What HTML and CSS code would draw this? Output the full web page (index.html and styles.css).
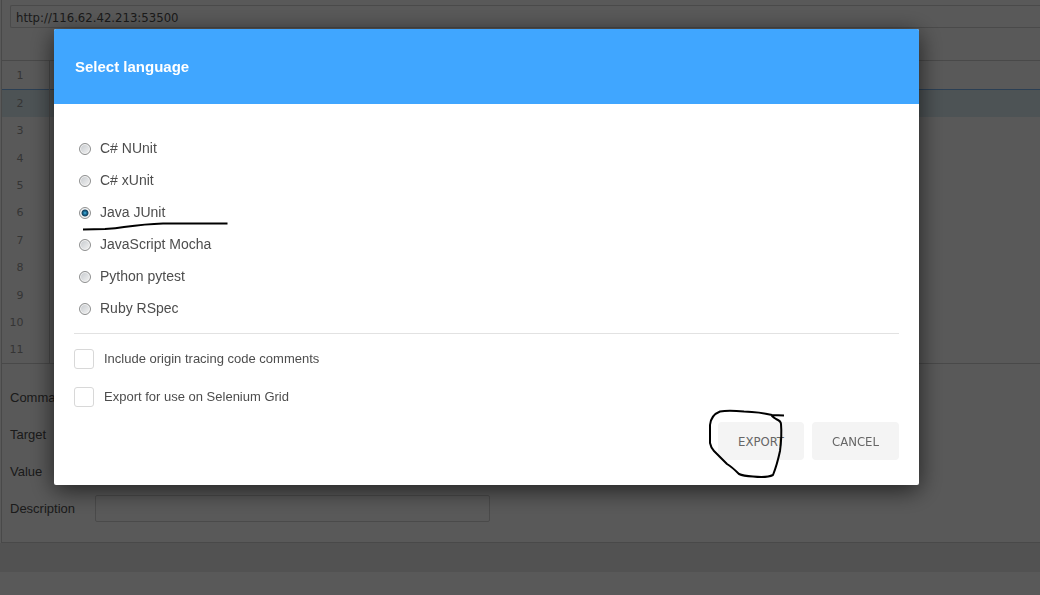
FILE: index.html
```
<!DOCTYPE html>
<html lang="en">

<head>
    <meta charset="UTF-8">
    <title>Select language</title>
    <link rel="stylesheet" href="styles.css">
</head>

<body>

    <main class="editor">
        <div class="url-bar">
            <input class="url" type="text" aria-label="URL" value="http://116.62.42.213:53500">
        </div>

        <table class="commands">
            <tbody>
                <tr><th scope="row">1</th><td></td></tr>
                <tr class="selected"><th scope="row">2</th><td></td></tr>
                <tr><th scope="row">3</th><td></td></tr>
                <tr><th scope="row">4</th><td></td></tr>
                <tr><th scope="row">5</th><td></td></tr>
                <tr><th scope="row">6</th><td></td></tr>
                <tr><th scope="row">7</th><td></td></tr>
                <tr><th scope="row">8</th><td></td></tr>
                <tr><th scope="row">9</th><td></td></tr>
                <tr><th scope="row">10</th><td></td></tr>
                <tr><th scope="row">11</th><td></td></tr>
            </tbody>
        </table>

        <form class="command-form">
            <label for="command">Command</label>
            <input id="command" type="text">
            <label for="target">Target</label>
            <input id="target" type="text">
            <label for="value">Value</label>
            <input id="value" type="text">
            <label for="description">Description</label>
            <input id="description" type="text">
        </form>
    </main>
    <div class="status-bar"></div>

    <div class="overlay">
        <form class="dialog" role="dialog" aria-labelledby="dialog-title">
            <h2 class="dialog-title" id="dialog-title">Select language</h2>
            <div class="dialog-body">
                <div class="languages">
                    <label><input type="radio" name="language">C# NUnit</label>
                    <label><input type="radio" name="language">C# xUnit</label>
                    <label><input type="radio" name="language" checked>Java JUnit</label>
                    <label><input type="radio" name="language">JavaScript Mocha</label>
                    <label><input type="radio" name="language">Python pytest</label>
                    <label><input type="radio" name="language">Ruby RSpec</label>
                </div>
                <div class="options">
                    <label><input type="checkbox">Include origin tracing code comments</label>
                    <label><input type="checkbox">Export for use on Selenium Grid</label>
                </div>
                <div class="buttons">
                    <div class="export">
                        <button type="button">EXPORT</button>
                        <!-- pen circle -->
                        <svg class="circle" width="80" height="72" viewBox="706 408 80 72">
                            <path d="M784 415.500L772 415Q760 412 744 411.500Q728 410 720 411.500Q711 415 710 425V443Q711 448 714 451L727 464Q732 467 739 474Q743 476 753 476.500Q767 478 773 475Q777 465 780 451Q782 436 781 424Q781 421 776 419Q771 416 771 414" />
                        </svg>
                    </div>
                    <button type="button">CANCEL</button>
                </div>
            </div>
            <!-- pen underline -->
            <svg class="underline" width="150" height="12" viewBox="80 220 150 12">
                <path d="M83 229.500L105 229Q116 228.500 124 227Q146 224 163 223.500H227.500" />
            </svg>
        </form>
    </div>

</body>

</html>
```
FILE: styles.css
```
* {
    box-sizing: border-box;
}

body {
    margin: 0;
    min-height: 100vh;
    background-color: #ffffff;
    font-family: "Liberation Sans", Arial, sans-serif;
    font-size: 13px;
    color: #4d4d4d;
}

.editor {
    margin-left: 1px;
    border-left: 1px solid #d0d0d0;
    border-bottom: 1px solid #d0d0d0;
}

.url-bar {
    padding: 5px 0 32px 8px;
}

.url {
    display: block;
    width: 100%;
    height: 23px;
    padding: 1px 5px 0;
    border: 1px solid #d4d4d4;
    border-right: 0;
    border-radius: 2px 0 0 2px;
    background-color: #ffffff;
    font-family: "DejaVu Sans Condensed", Tahoma, sans-serif;
    font-size: 13px;
    color: #4d4d4d;
}

.commands {
    width: 100%;
    height: 304px;
    border-collapse: collapse;
    border-top: 1px solid #d0d0d0;
    border-bottom: 1px solid #d0d0d0;
}

.commands tr {
    height: 27px;
}

.commands tr:first-child {
    height: 29px;
}

.commands th {
    width: 47px;
    padding: 0 25px 0 0;
    border-right: 1px solid #d0d0d0;
    font-family: "DejaVu Sans", Verdana, sans-serif;
    font-size: 11px;
    font-weight: normal;
    text-align: right;
    color: #999999;
}

.commands td {
    padding: 0;
}

.commands .selected {
    border-top: 1px solid #7bb4f0;
    background-color: #dcedf3;
}

.command-form {
    display: grid;
    grid-template-columns: 85px 395px;
    gap: 10px 0;
    align-items: center;
    padding: 20px 8px;
}

.command-form input {
    height: 27px;
    border: 1px solid #d4d4d4;
    border-radius: 2px;
    background-color: #ffffff;
}

.status-bar {
    height: 29px;
    background-color: #ececec;
}

.overlay {
    position: fixed;
    inset: 0;
    display: flex;
    align-items: flex-start;
    padding: 29px 121px 0 54px;
    background-color: rgba(0, 0, 0, 0.65);
}

.dialog {
    position: relative;
    flex: 1;
    border-radius: 2px;
    background-color: #ffffff;
    box-shadow: 0 5px 24px rgba(0, 0, 0, 0.65);
}

.dialog-title {
    margin: 0;
    padding: 1px 21px 0;
    border-radius: 2px 2px 0 0;
    background-color: #40a6ff;
    font-size: 15px;
    line-height: 74px;
    color: #ffffff;
}

.dialog-body {
    padding: 28px 20px 25px;
}

.languages {
    display: flex;
    flex-direction: column;
    align-items: flex-start;
    padding-bottom: 9px;
    border-bottom: 1px solid #e2e2e2;
    font-size: 14px;
    line-height: 32px;
}

.languages label,
.options label {
    display: flex;
    align-items: center;
}

.languages input {
    appearance: none;
    width: 12px;
    height: 12px;
    margin: 2px 9px 0 5px;
    border: 1px solid #8e8f8f;
    border-radius: 50%;
    background: linear-gradient(135deg, #c4c8cc, #f4f4f4);
    box-shadow: inset 0 0 0 1px #f4f4f4;
}

.languages input:checked {
    background: radial-gradient(circle, #6fd0f0 0, #1d7fae 1px, #12415f 3px, #f4f4f4 4px);
}

.options {
    display: flex;
    flex-direction: column;
    align-items: flex-start;
    gap: 18px;
    padding: 15px 0;
    line-height: 20px;
}

.options input {
    appearance: none;
    width: 20px;
    height: 20px;
    margin: 0 10px 0 0;
    border: 1px solid #d8d8d8;
    border-radius: 3px;
    background-color: #ffffff;
}

.buttons {
    display: flex;
    justify-content: flex-end;
    gap: 8px;
}

.buttons button {
    display: block;
    height: 38px;
    padding: 0 20px;
    border: 0;
    border-radius: 4px;
    background-color: #f4f4f4;
    font-family: "DejaVu Sans Condensed", Tahoma, sans-serif;
    font-size: 13px;
    color: #666666;
}

.export {
    position: relative;
}

.circle {
    position: absolute;
    top: -14px;
    right: 18px;
}

.underline {
    position: absolute;
    top: 191px;
    left: 26px;
}

.circle path,
.underline path {
    fill: none;
    stroke: #000000;
    stroke-width: 2;
    stroke-linejoin: round;
}
```
